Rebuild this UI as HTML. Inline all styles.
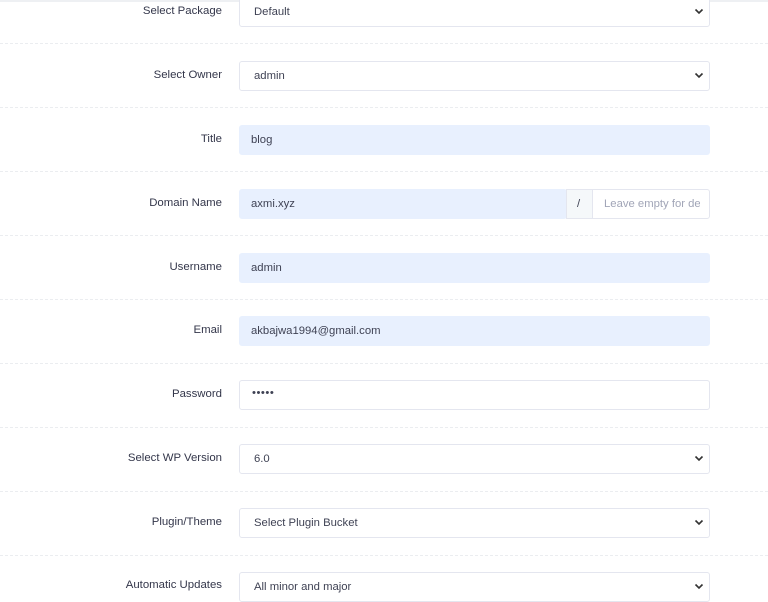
<!DOCTYPE html>
<html><head><style>
body{margin:0;width:768px;height:590px;overflow:hidden;background:#fff;font-family:"Liberation Sans",sans-serif;font-size:11.3px;position:relative}
.top{position:absolute;left:0;top:0;width:768px;height:2px;background:#eef0f3}
.sep{position:absolute;left:0;width:768px;border-top:1px dashed #ebedf0}
.lab{position:absolute;right:546px;color:#33364a;font-size:11.4px;white-space:nowrap}
.f{position:absolute;left:239px;width:469px;height:28px;border:1px solid #e4e6ef;border-radius:3px;background:#fff;color:#3f4254;box-sizing:content-box}
.f span{position:absolute;left:14px;top:8px}
.a{background:#e8f0fe;border-color:#e8f0fe}
.a span{left:11px}
.chev{position:absolute;right:5px;top:10px}
</style></head><body>
<div class="top"></div>
<div class="sep" style="top:43px"></div>
<div class="sep" style="top:107px"></div>
<div class="sep" style="top:171px"></div>
<div class="sep" style="top:235px"></div>
<div class="sep" style="top:299px"></div>
<div class="sep" style="top:363px"></div>
<div class="sep" style="top:427px"></div>
<div class="sep" style="top:491px"></div>
<div class="sep" style="top:555px"></div>

<div class="lab" style="top:5px">Select Package</div>
<div class="f" style="top:-3px"><span>Default</span><svg class="chev" width="10" height="7" viewBox="0 0 10 7"><path d="M1.5 1.5L5 5 8.5 1.5" stroke="#333" stroke-width="1.6" fill="none"/></svg></div>

<div class="lab" style="top:69px">Select Owner</div>
<div class="f" style="top:61px"><span>admin</span><svg class="chev" width="10" height="7" viewBox="0 0 10 7"><path d="M1.5 1.5L5 5 8.5 1.5" stroke="#333" stroke-width="1.6" fill="none"/></svg></div>

<div class="lab" style="top:133px">Title</div>
<div class="f a" style="top:125px"><span>blog</span></div>

<div class="lab" style="top:197px">Domain Name</div>
<div class="f a" style="top:189px;width:326px"><span>axmi.xyz</span></div>
<div class="f" style="top:189px;left:566px;width:25px;background:#f5f8fa;border-radius:0"><span style="left:10px">/</span></div>
<div class="f" style="top:189px;left:592px;width:116px;color:#a1a5b7;overflow:hidden;border-radius:0 3px 3px 0"><span style="left:11px;white-space:nowrap;width:96px;overflow:hidden">Leave empty for default</span></div>

<div class="lab" style="top:261px">Username</div>
<div class="f a" style="top:253px"><span>admin</span></div>

<div class="lab" style="top:324px">Email</div>
<div class="f a" style="top:316px"><span>akbajwa1994@gmail.com</span></div>

<div class="lab" style="top:388px">Password</div>
<div class="f" style="top:380px"><span style="left:12px;top:6px;letter-spacing:0.5px">•••••</span></div>

<div class="lab" style="top:452px">Select WP Version</div>
<div class="f" style="top:444px"><span>6.0</span><svg class="chev" width="10" height="7" viewBox="0 0 10 7"><path d="M1.5 1.5L5 5 8.5 1.5" stroke="#333" stroke-width="1.6" fill="none"/></svg></div>

<div class="lab" style="top:516px">Plugin/Theme</div>
<div class="f" style="top:508px"><span>Select Plugin Bucket</span><svg class="chev" width="10" height="7" viewBox="0 0 10 7"><path d="M1.5 1.5L5 5 8.5 1.5" stroke="#333" stroke-width="1.6" fill="none"/></svg></div>

<div class="lab" style="top:579px">Automatic Updates</div>
<div class="f" style="top:572px"><span>All minor and major</span><svg class="chev" width="10" height="7" viewBox="0 0 10 7"><path d="M1.5 1.5L5 5 8.5 1.5" stroke="#333" stroke-width="1.6" fill="none"/></svg></div>
</body></html>
